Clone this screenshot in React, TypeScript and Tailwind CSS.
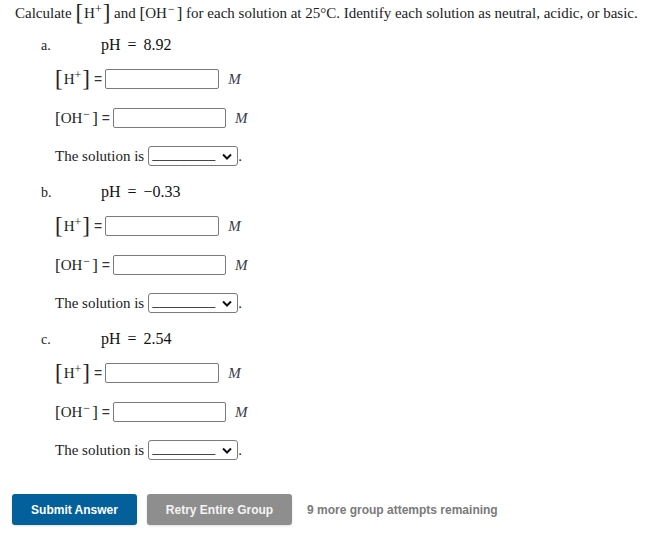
import React from "react";

const serif = { fontFamily: '"Liberation Serif", "Times New Roman", serif' };

function HPlus() {
  return (
    <span className="inline-flex items-center text-[15px] text-[#222]" style={serif}>
      <span className="text-[23px] leading-none font-light -mt-[2px]">[</span>
      <span className="ml-[1px]">H</span>
      <span className="text-[12px] leading-none -mt-[8px]">+</span>
      <span className="text-[23px] leading-none font-light -mt-[2px] ml-[1px]">]</span>
    </span>
  );
}

function OHMinus() {
  return (
    <span className="inline-flex items-center text-[15px] text-[#222]" style={serif}>
      <span className="text-[17px] leading-none">[</span>
      <span>OH</span>
      <span className="text-[12px] leading-none -mt-[8px] ml-[1px]">−</span>
      <span className="text-[17px] leading-none ml-[2px]">]</span>
    </span>
  );
}

function Eq() {
  return (
    <span
      className="text-[14px] text-[#333] ml-[4px] mr-[3px]"
      style={{ fontFamily: '"Liberation Sans", Arial, sans-serif' }}
    >
      =
    </span>
  );
}

function Unit() {
  return (
    <span className="italic text-[15px] text-[#3a3a4a] ml-[9px]" style={serif}>
      M
    </span>
  );
}

function Section({ label, ph }: { label: string; ph: string }) {
  return (
    <div className="flex flex-col">
      <div className="h-[24px] flex items-center">
        <span className="w-[86px] pl-[26px] text-[14px] text-[#222]" style={serif}>
          {label}
        </span>
        <span className="text-[16px] text-[#111] flex items-center" style={serif}>
          <span>pH</span>
          <span className="mx-[7px]">=</span>
          <span>{ph}</span>
        </span>
      </div>
      <div className="h-[24px] mt-[10px] flex items-center pl-[40px]">
        <HPlus />
        <Eq />
        <div className="w-[114px] h-[20px] border border-[#7a7a7a] rounded-[2px] bg-white" />
        <Unit />
      </div>
      <div className="h-[24px] mt-[15px] flex items-center pl-[40px]">
        <OHMinus />
        <Eq />
        <div className="w-[113px] h-[20px] border border-[#7a7a7a] rounded-[2px] bg-white" />
        <Unit />
      </div>
      <div className="h-[24px] mt-[14px] flex items-center pl-[40px]">
        <span className="text-[15px] text-[#222]" style={serif}>
          The solution is
        </span>
        <div className="ml-[4px] w-[90px] h-[20px] border border-[#7a7a7a] rounded-[3px] bg-white flex items-center justify-between pl-[3px] pr-[5px]">
          <span className="text-[14px] text-[#111] -mt-[4px]" style={serif}>
            _________
          </span>
          <svg width="10" height="7" viewBox="0 0 10 7">
            <path d="M1 1.5 L5 5.5 L9 1.5" fill="none" stroke="#111" strokeWidth="2" />
          </svg>
        </div>
        <span className="text-[15px] text-[#222]" style={serif}>
          .
        </span>
      </div>
    </div>
  );
}

export default function App() {
  return (
    <div className="w-[646px] h-[535px] bg-white relative">
      <div className="pl-[15px] pt-[1px]">
        <div className="h-[24px] flex items-center text-[15px] text-[#222] whitespace-nowrap" style={serif}>
          <span>Calculate&nbsp;</span>
          <HPlus />
          <span>&nbsp;and&nbsp;</span>
          <OHMinus />
          <span>&nbsp;for each solution at 25°C. Identify each solution as neutral, acidic, or basic.</span>
        </div>
      </div>
      <div className="pl-[15px] mt-[8px] flex flex-col gap-[12px]">
        <Section label="a." ph="8.92" />
        <Section label="b." ph="−0.33" />
        <Section label="c." ph="2.54" />
      </div>
      <div
        className="mt-[32px] pl-[12px] flex items-center"
        style={{ fontFamily: '"Liberation Sans", Arial, sans-serif' }}
      >
        <button className="w-[125px] h-[31px] rounded-[3px] bg-[#03609b] text-white text-[12px] font-bold shadow-sm">
          Submit Answer
        </button>
        <button className="ml-[10px] w-[145px] h-[31px] rounded-[3px] bg-[#8e8e8e] text-[#f4f4f4] text-[12px] font-bold shadow-sm">
          Retry Entire Group
        </button>
        <span className="ml-[15px] text-[12px] font-bold text-[#7a7a7a]">
          9 more group attempts remaining
        </span>
      </div>
    </div>
  );
}
